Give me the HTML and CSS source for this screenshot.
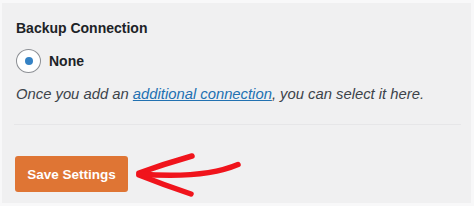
FILE: index.html
```html
<!DOCTYPE html>
<html lang="en">
<head>
    <meta charset="UTF-8">
    <meta name="viewport" content="width=device-width, initial-scale=1.0">
    <title>Backup Connection</title>
    <link rel="stylesheet" href="styles.css">
</head>
<body>
    <div class="panel">
        <h3 class="title">Backup Connection</h3>
        <label class="radio-row">
            <span class="radio"><span class="dot"></span></span>
            <span class="radio-label">None</span>
        </label>
        <p class="hint">Once you add an <a href="#">additional connection</a>, you can select it here.</p>
        <hr class="divider">
        <div class="actions">
            <button class="save">Save Settings</button>
            <svg class="arrow" width="110" height="48" viewBox="0 0 110 48">
                <path d="M58 6 Q30 14 5 23" />
                <path d="M5 25 Q30 35 57 44" />
                <path d="M5 24 Q70 29 104 14.5" />
            </svg>
        </div>
    </div>
</body>
</html>
```

FILE: styles.css
```css
* {
    margin: 0;
    padding: 0;
    box-sizing: border-box;
}

body {
    background: #f8f8f9;
    font-family: "Liberation Sans", Arial, sans-serif;
    color: #1d2327;
}

.panel {
    margin: 3px 3px 3px 2px;
    height: 200px;
    background: #f0f0f1;
    padding: 15px 10px 0 13px;
}

.title {
    font-size: 14px;
    font-weight: bold;
    line-height: 20px;
    padding-left: 1px;
}

.radio-row {
    display: flex;
    align-items: center;
    gap: 8px;
    margin-top: 11px;
    height: 24px;
}

.radio {
    width: 25px;
    height: 24px;
    border-radius: 50%;
    border: 1px solid #8c8f94;
    background: #fff;
    display: flex;
    align-items: center;
    justify-content: center;
    margin-left: 1px;
}

.dot {
    width: 8px;
    height: 8px;
    border-radius: 50%;
    background: #3582c4;
}

.radio-label {
    font-size: 14px;
    font-weight: bold;
}

.hint {
    margin-top: 11px;
    font-size: 14.8px;
    font-style: italic;
    line-height: 20px;
    color: #3c434a;
    padding-left: 1px;
}

.hint a {
    color: #2271b1;
}

.divider {
    border: none;
    border-top: 1px solid #e6e6e8;
    margin: 20px 0 0 -1px;
}

.actions {
    display: flex;
    align-items: center;
    margin-top: 25px;
}

.save {
    width: 113px;
    height: 36px;
    border: none;
    border-radius: 3px;
    background: #df7534;
    color: #fff;
    font-family: "Liberation Sans", Arial, sans-serif;
    font-size: 13.5px;
    font-weight: bold;
    cursor: pointer;
}

.arrow {
    margin-left: 6px;
    fill: none;
    stroke: #f0141c;
    stroke-width: 5.5;
    stroke-linecap: round;
}
```
